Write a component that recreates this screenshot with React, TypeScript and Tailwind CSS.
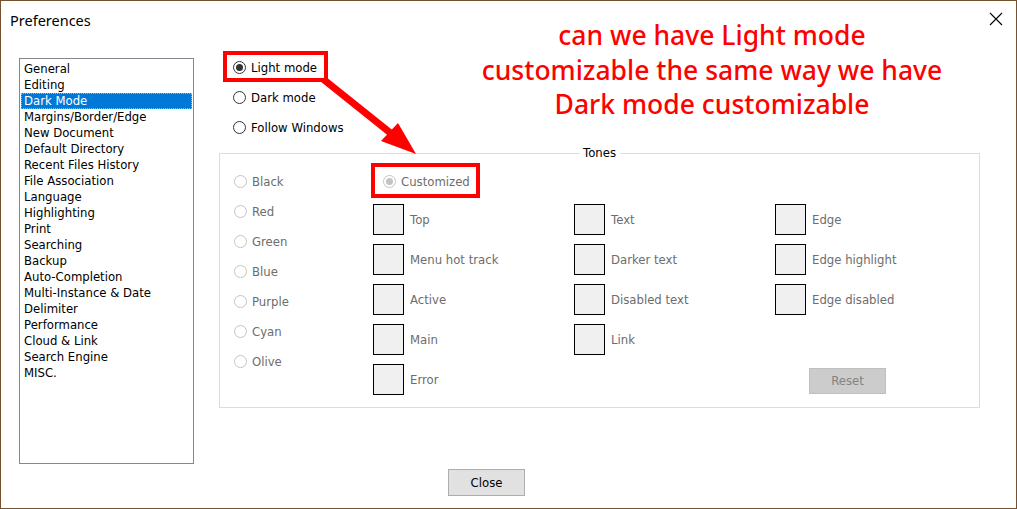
const pages = [
  'General', 'Editing', 'Dark Mode', 'Margins/Border/Edge', 'New Document', 'Default Directory',
  'Recent Files History', 'File Association', 'Language', 'Highlighting', 'Print', 'Searching',
  'Backup', 'Auto-Completion', 'Multi-Instance & Date', 'Delimiter', 'Performance', 'Cloud & Link',
  'Search Engine', 'MISC.',
];

const tones = ['Black', 'Red', 'Green', 'Blue', 'Purple', 'Cyan', 'Olive'];

const swatches = [
  ['Top', 'Text', 'Edge'],
  ['Menu hot track', 'Darker text', 'Edge highlight'],
  ['Active', 'Disabled text', 'Edge disabled'],
  ['Main', 'Link', ''],
  ['Error', '', ''],
];

function Radio({ label, checked, disabled }: { label: string; checked?: boolean; disabled?: boolean }) {
  return (
    <div className="flex items-center h-[30px]">
      <span
        className={`w-[13px] h-[13px] rounded-full border flex items-center justify-center bg-white ${
          disabled ? 'border-[#c4c4c4]' : 'border-[#333333]'
        }`}
      >
        {checked && <span className={`w-[7px] h-[7px] rounded-full ${disabled ? 'bg-[#c4c4c4]' : 'bg-[#333333]'}`} />}
      </span>
      <span className={`ml-[5px] pt-[1px] ${disabled ? 'text-[#6d6d6d]' : 'text-black'}`}>{label}</span>
    </div>
  );
}

export default function App() {
  return (
    <div className="relative w-[1017px] h-[509px] bg-white border border-[#77502d] overflow-hidden font-['DejaVu_Sans',sans-serif] text-[11.7px] leading-[16px] text-black">
      {/* title bar */}
      <div className="h-[51px] pl-[9px] pt-[10px] font-['Noto_Sans',sans-serif] text-[14.5px] leading-[18px]">Preferences</div>
      <svg className="absolute left-[988px] top-[11px]" width="14" height="14" viewBox="0 0 14 14">
        <path d="M1 1L13 13M13 1L1 13" stroke="#000" strokeWidth="1.1" fill="none" />
      </svg>

      <div className="flex h-[412px]">
        {/* page list */}
        <div className="ml-[18px] mt-[6px] w-[175px] h-[406px] border border-[#828790] pt-[2px] px-[1px]">
          {pages.map((p) =>
            p === 'Dark Mode' ? (
              <div key={p} className="h-[16px] pl-[2px] bg-[#0078d7] text-white border border-dotted border-[#f5a25c] leading-[14px]">
                {p}
              </div>
            ) : (
              <div key={p} className="h-[16px] pl-[3px]">{p}</div>
            )
          )}
        </div>

        <div className="ml-[25px] flex flex-col">
          <div className="pl-[14px]">
            <Radio label="Light mode" checked />
            <Radio label="Dark mode" />
            <Radio label="Follow Windows" />
          </div>

          {/* tones group */}
          <div className="relative mt-[11px] w-[761px] h-[255px] border border-[#dcdcdc] flex">
            <span className="absolute -top-[9px] left-1/2 -translate-x-1/2 px-[4px] bg-white">Tones</span>
            <div className="w-[153px] pl-[14px] pt-[12px]">
              {tones.map((t) => (
                <Radio key={t} label={t} disabled />
              ))}
            </div>
            <div className="pt-[12px]">
              <div className="pl-[10px]">
                <Radio label="Customized" checked disabled />
              </div>
              <div className="mt-[8px] grid grid-cols-[201px_201px_201px] gap-y-[9px]">
                {swatches.flatMap((row, r) =>
                  row.map((s, c) =>
                    s ? (
                      <div key={`${r}-${c}`} className="flex items-center h-[31px]">
                        <span className="w-[31px] h-[31px] border border-black bg-[#f0f0f0]" />
                        <span className="ml-[6px] text-[#6d6d6d]">{s}</span>
                      </div>
                    ) : r === 4 && c === 2 ? (
                      <div key="reset" className="h-[31px] pl-[34px] pt-[4px]">
                        <div className="w-[77px] h-[26px] bg-[#cccccc] border border-[#bfbfbf] flex items-center justify-center text-[#838383]">
                          Reset
                        </div>
                      </div>
                    ) : (
                      <div key={`${r}-${c}`} className="h-[31px]" />
                    )
                  )
                )}
              </div>
            </div>
          </div>
        </div>
      </div>

      <div className="pl-[447px] pt-[5px]">
        <div className="w-[77px] h-[27px] bg-[#e1e1e1] border border-[#adadad] flex items-center justify-center">Close</div>
      </div>

      {/* annotation */}
      <div className="absolute left-[711px] top-[17px] -translate-x-1/2 whitespace-nowrap text-center font-['Noto_Sans',sans-serif] font-medium text-[26.5px] leading-[34.5px] text-[#ff0000]">
        <div>can we have Light mode</div>
        <div>customizable the same way we have</div>
        <div>Dark mode customizable</div>
      </div>
      <div className="absolute left-[222px] top-[50px] w-[105px] h-[31px] border-[4px] border-[#ff0000]" />
      <div className="absolute left-[370px] top-[162px] w-[109px] h-[35px] border-[4px] border-[#ff0000]" />
      <svg className="absolute left-0 top-0" width="1017" height="509" viewBox="0 0 1017 509">
        <line x1="322" y1="78" x2="392" y2="134" stroke="#ff0000" strokeWidth="7" />
        <polygon points="380,140 397,122 415,153" fill="#ff0000" />
      </svg>
    </div>
  );
}
